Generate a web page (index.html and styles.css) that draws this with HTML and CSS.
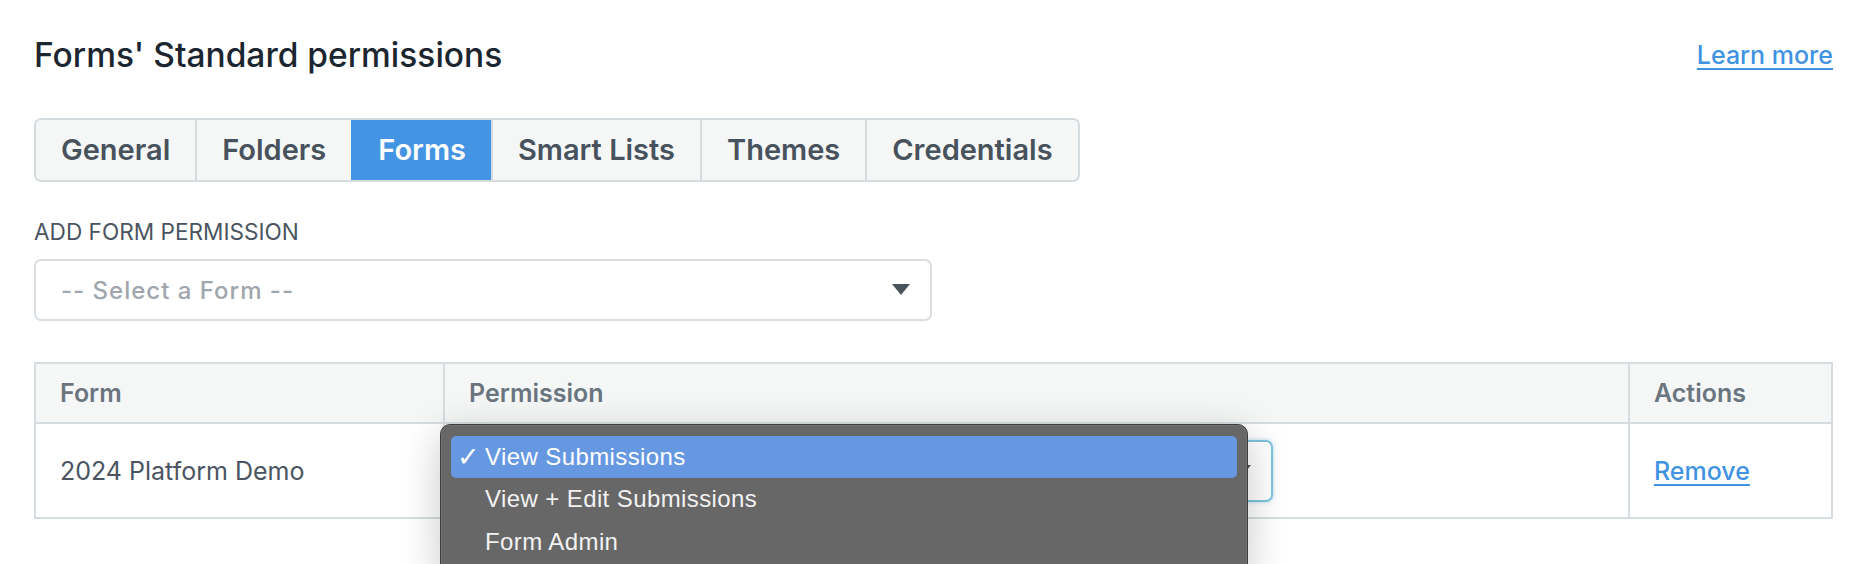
FILE: index.html
```html
<!DOCTYPE html>
<html lang="en">

<head>
  <meta charset="UTF-8" />
  <meta name="viewport" content="width=device-width, initial-scale=1.0" />
  <title>Forms' Standard permissions</title>
  <link rel="stylesheet" href="styles.css">
</head>

<body>
  <div class="page">
    <div class="header">
      <h2 class="title">Forms' Standard permissions</h2>
      <a class="link learn" href="#">Learn more</a>
    </div>

    <div class="tabs">
      <div class="tab">General</div>
      <div class="tab">Folders</div>
      <div class="tab active">Forms</div>
      <div class="tab">Smart Lists</div>
      <div class="tab">Themes</div>
      <div class="tab">Credentials</div>
    </div>

    <label class="field-label">ADD FORM PERMISSION</label>
    <div class="select">
      <span class="placeholder">-- Select a Form --</span>
      <span class="caret"></span>
    </div>

    <table class="perm-table">
      <tr>
        <th class="col-form">Form</th>
        <th class="col-perm">Permission</th>
        <th class="col-actions">Actions</th>
      </tr>
      <tr>
        <td>2024 Platform Demo</td>
        <td>
          <div class="cell-select">
            <span class="caret"></span>
            <!-- native popup menu, open -->
            <ul class="menu">
              <li class="menu-item selected"><span class="check">&#10003;</span>View Submissions</li>
              <li class="menu-item">View + Edit Submissions</li>
              <li class="menu-item">Form Admin</li>
            </ul>
          </div>
        </td>
        <td><a class="link" href="#">Remove</a></td>
      </tr>
    </table>
  </div>
</body>

</html>
```

FILE: styles.css
```css
body { margin: 0; background: #fff; font-family: Inter, "Noto Sans", sans-serif; color: #4a5561; }
.page { height: 564px; box-sizing: border-box; overflow: hidden; padding: 33px 41px 0 34px; }

.header { display: flex; justify-content: space-between; align-items: center; height: 44px; }
.title { margin: 0; font-size: 33.5px; font-weight: 500; color: #1b2630; line-height: 44px; }
.link { color: #3f93e2; font-size: 25px; font-weight: 500; text-decoration: underline; text-decoration-thickness: 2px; text-underline-offset: 4px; }

.tabs { display: inline-flex; margin-top: 41px; border: 2px solid #d5dce0; border-radius: 7px; background: #f5f7f7; overflow: hidden; }
.tab { height: 60px; line-height: 60px; padding: 0 25px; font-size: 29px; font-weight: 600; color: #47525d; border-left: 2px solid #d5dce0; }
.tab:first-child { border-left: 0; }
.tab.active { background: #4394e3; color: #fff; border-left-color: #4394e3; }
.tab.active + .tab { border-left-color: #d5dce0; }

.field-label { display: block; margin-top: 35px; font-size: 22.6px; line-height: 30px; color: #4a5561; }

.select { position: relative; margin-top: 12px; width: 898px; height: 62px; box-sizing: border-box; border: 2px solid #d8dee2; border-radius: 7px; display: flex; align-items: center; padding-left: 25px; }
.placeholder { font-size: 24px; font-weight: 500; letter-spacing: 1px; color: #9fa6ae; }
.caret { position: absolute; right: 20px; top: 50%; margin-top: -6px; width: 0; height: 0; border-left: 9px solid transparent; border-right: 9px solid transparent; border-top: 11px solid #48535e; }

.perm-table { margin-top: 41px; width: 1799px; border-collapse: collapse; border: 2px solid #d6dde0; }
.perm-table th, .perm-table td { border: 2px solid #d6dde0; text-align: left; padding: 0 24px; }
.perm-table th { height: 58px; background: #f5f7f7; font-size: 25px; font-weight: 600; color: #6a7580; }
.perm-table td { height: 93px; font-size: 25px; color: #4a5561; }
.col-form { width: 359px; }
.col-perm { width: 1135px; }

.cell-select { position: relative; width: 804px; height: 62px; box-sizing: border-box; border: 2px solid #7fc3dd; border-radius: 7px; box-shadow: 0 0 4px rgba(100, 180, 220, 0.5); }

.menu { position: absolute; left: -31px; top: -18px; width: 808px; margin: 0; padding: 11px 0 11px; list-style: none; box-sizing: border-box; background: #676767; border: 1px solid #3e3e3e; border-radius: 10px; box-shadow: 0 10px 40px rgba(0, 0, 0, 0.22), 0 0 0 1px rgba(255, 255, 255, 0.08) inset; font-family: "Liberation Sans", Arial, sans-serif; font-size: 24px; letter-spacing: 0.4px; color: #f2f2f2; }
.menu-item { display: flex; align-items: center; height: 42.5px; margin: 0 10px; padding-left: 34px; border-radius: 5px; }
.menu-item.selected { position: relative; background: #6698e2; color: #fff; }
.check { position: absolute; left: 6px; font-size: 27px; font-family: "DejaVu Sans", sans-serif; }
```
